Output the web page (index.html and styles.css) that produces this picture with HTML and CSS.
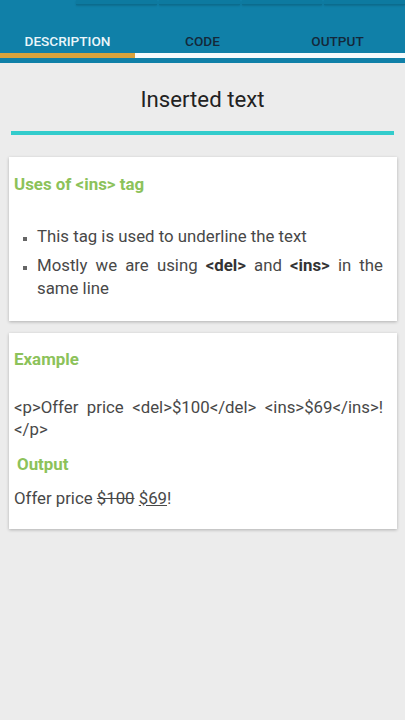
FILE: index.html
```html
<html>

<head>
    <link rel="stylesheet" href="styles.css">
</head>

<body>

    <div class="appbar">
        <div class="toolbar">
            <span class="slot"></span>
            <span class="slot"></span>
            <span class="slot"></span>
            <span class="slot"></span>
        </div>
        <div class="tabs">
            <a href="#" class="tab active">DESCRIPTION</a>
            <a href="#" class="tab">CODE</a>
            <a href="#" class="tab">OUTPUT</a>
        </div>
        <div class="indicator">
            <span class="done"></span>
        </div>
    </div>

    <h1 class="title">Inserted text</h1>
    <div class="rule"></div>

    <div class="card">
        <h3>Uses of &lt;ins&gt; tag</h3>
        <ul class="points">
            <li>This tag is used to underline the text</li>
            <li>Mostly we are using <b>&lt;del&gt;</b> and <b>&lt;ins&gt;</b> in the same line</li>
        </ul>
    </div>

    <div class="card">
        <h3>Example</h3>
        <p class="code">&lt;p&gt;Offer price &lt;del&gt;$100&lt;/del&gt; &lt;ins&gt;$69&lt;/ins&gt;!&lt;/p&gt;</p>
        <h3 class="out-head">Output</h3>
        <p class="result">Offer price <del>$100</del> <ins>$69</ins>!</p>
    </div>

</body>

</html>
```

FILE: styles.css
```css
body {
    margin: 0;
    background-color: #ececec;
    font-family: Roboto, "Noto Sans", sans-serif;
    color: #484848;
}

/* Top bar with tabs */
.appbar {
    background-color: #1080a8;
    height: 63px;
    display: flex;
    flex-direction: column;
}

.toolbar {
    display: flex;
    gap: 2px;
    padding-left: 76px;
    height: 4px;
}

.slot {
    width: 88px;
    height: 4px;
    background-color: #0d7aa0;
    border-bottom: 1px solid #0b6c8e;
    box-shadow: 0 1px 2px rgba(0, 0, 0, 0.15);
}

.tabs {
    display: flex;
    margin-top: 28px;
    height: 21px;
}

.tab {
    flex: 1;
    text-align: center;
    font-size: 13.6px;
    font-weight: 500;
    color: #14283a;
    text-decoration: none;
    line-height: 18px;
}

.tab.active {
    color: #eaf6fa;
}

.indicator {
    height: 5px;
    background-color: #f6fbfd;
}

.indicator .done {
    display: block;
    width: 135px;
    height: 5px;
    background-color: #d9a33c;
}

.title {
    margin: 0;
    padding-top: 24px;
    text-align: center;
    font-size: 22.2px;
    font-weight: 400;
    color: #222;
    line-height: 24px;
}

.rule {
    margin: 20px 11px 0 11px;
    height: 4px;
    background-color: #33cccc;
}

/* Cards */
.card {
    background-color: #fff;
    margin: 22px 8px 0 9px;
    padding: 17px 14px 15px 5px;
    box-shadow: 0 1px 3px rgba(0, 0, 0, 0.25);
}

.card + .card {
    margin-top: 12px;
    padding-top: 16px;
    padding-bottom: 20px;
}

.card h3 {
    margin: 0;
    font-size: 16.9px;
    font-weight: 700;
    color: #8cc25a;
    line-height: 20px;
}

.points {
    list-style: square;
    margin: 31px 0 0 0;
    padding-left: 23px;
    font-size: 16.8px;
    line-height: 23px;
    text-align: justify;
}

.points li {
    margin-bottom: 6px;
}

.points li::marker {
    color: #666;
    font-size: 12px;
}

.points b {
    color: #333;
}

.code {
    margin: 27px 0 0 0;
    font-size: 16.8px;
    line-height: 22px;
    text-align: justify;
}

.card .out-head {
    margin-top: 14px;
    padding-left: 3px;
}

.result {
    margin: 13px 0 0 0;
    font-size: 16.8px;
    line-height: 22px;
}

.result del,
.result ins {
    color: #484848;
}
```
